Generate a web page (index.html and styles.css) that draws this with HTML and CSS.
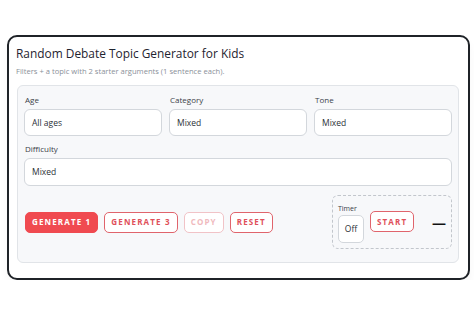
FILE: index.html
```html
<!DOCTYPE html>
<html lang="en">
<head>
<meta charset="utf-8">
<title>Random Debate Topic Generator for Kids</title>
<link rel="stylesheet" href="styles.css">
</head>
<body>
<div class="card">
  <h1 class="title">Random Debate Topic Generator for Kids</h1>
  <p class="subtitle">Filters + a topic with 2 starter arguments (1 sentence each).</p>
  <div class="panel">
    <div class="grid3">
      <div class="field">
        <label class="label">Age</label>
        <div class="select">All ages</div>
      </div>
      <div class="field">
        <label class="label">Category</label>
        <div class="select">Mixed</div>
      </div>
      <div class="field">
        <label class="label">Tone</label>
        <div class="select">Mixed</div>
      </div>
    </div>
    <div class="field">
      <label class="label">Difficulty</label>
      <div class="select">Mixed</div>
    </div>
    <div class="actions">
      <div class="btns">
        <button class="btn btn-primary">Generate 1</button>
        <button class="btn">Generate 3</button>
        <button class="btn btn-disabled">Copy</button>
        <button class="btn">Reset</button>
      </div>
      <div class="timer">
        <div class="timer-field">
          <span class="timer-label">Timer</span>
          <div class="timer-select">Off</div>
        </div>
        <button class="btn">Start</button>
        <span class="timer-display">—</span>
      </div>
    </div>
  </div>
</div>
</body>
</html>
```
FILE: styles.css
```css
* { box-sizing: border-box; }
html, body { margin: 0; padding: 0; background: #fff; }
body {
  font-family: "Open Sans", "Noto Sans", sans-serif;
  color: #1f2937;
  padding: 35px 4px 0 7px;
}
.card {
  width: 463px;
  height: 245px;
  border: 2px solid #1f2328;
  border-radius: 10px;
  padding: 8px 9px 0 8px;
  box-shadow: 0 6px 10px rgba(0,0,0,0.04);
}
.title {
  margin: 0 0 0 -1px;
  font-size: 11.9px;
  font-weight: 400;
  line-height: 17px;
  color: #1f2430;
}
.subtitle {
  margin: 3px 0 0 -1px;
  font-size: 7.6px;
  line-height: 12px;
  color: #8a9099;
}
.panel {
  margin-top: 8px;
  height: 178px;
  background: #f7f8fa;
  border: 1px solid #e1e4e8;
  border-radius: 6px;
  padding: 8px 6px 0 6px;
}
.grid3 {
  display: grid;
  grid-template-columns: 1fr 1fr 1fr;
  column-gap: 7px;
}
.field { display: flex; flex-direction: column; }
.label {
  font-size: 8px;
  line-height: 12px;
  color: #3b4048;
  padding-left: 1px;
  margin-bottom: 3px;
}
.select {
  height: 27px;
  background: #fff;
  border: 1px solid #d3d7dc;
  border-radius: 6px;
  font-size: 8.5px;
  line-height: 25px;
  padding-left: 7px;
  color: #2a2f36;
}
.grid3 + .field { margin-top: 7px; }
.grid3 + .field .select { height: 28px; line-height: 26px; }
.actions {
  display: flex;
  align-items: center;
  justify-content: space-between;
  margin-top: 9px;
}
.btns { display: flex; gap: 6px; padding-left: 1px; }
.btn {
  font-family: "Open Sans", "Noto Sans", sans-serif;
  height: 21px;
  padding: 0 6px;
  border: 1.5px solid #e0646c;
  border-radius: 5px;
  background: #fff;
  color: #e0505a;
  font-size: 8px;
  font-weight: 700;
  letter-spacing: 1.15px;
  text-transform: uppercase;
  line-height: 18px;
}
.btn-primary {
  background: #f04a50;
  border-color: #f04a50;
  color: #fff;
}
.btn-disabled {
  border-color: #f1c3c7;
  color: #f0b9bd;
}
.timer {
  width: 120px;
  height: 54px;
  border: 1px dashed #c2c6cc;
  border-radius: 6px;
  display: flex;
  align-items: center;
  padding: 0 5px;
}
.timer-field { display: flex; flex-direction: column; margin-top: 2px; }
.timer-label { font-size: 7px; line-height: 10px; color: #3b4048; margin-bottom: 1px; }
.timer-select {
  width: 26px;
  height: 28px;
  background: #fff;
  border: 1px solid #d3d7dc;
  border-radius: 5px;
  font-size: 8.5px;
  line-height: 26px;
  text-align: center;
  color: #2a2f36;
}
.timer .btn { margin-left: 6px; margin-top: -1px; }
.timer-display {
  margin-left: auto;
  margin-right: 0;
  font-size: 14px;
  font-weight: 700;
  color: #111;
}
```
